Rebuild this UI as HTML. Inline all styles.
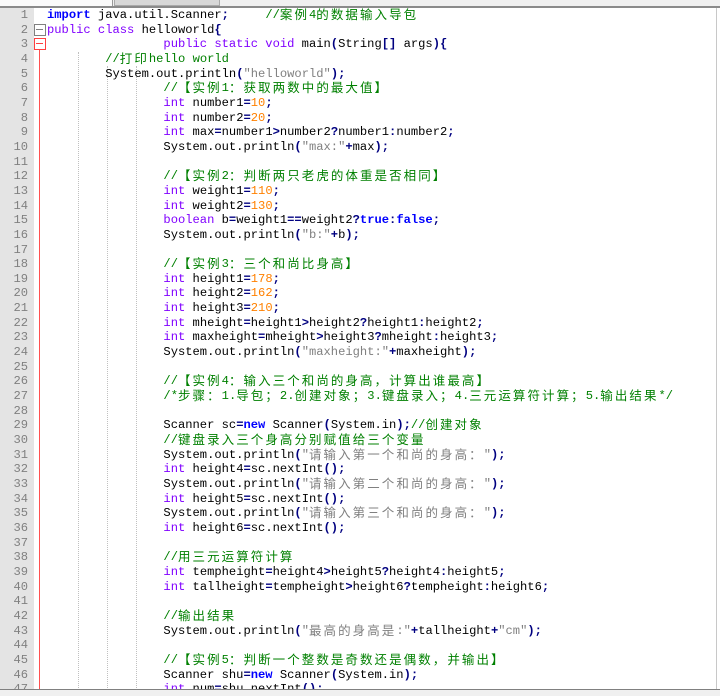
<!DOCTYPE html>
<html><head><meta charset="utf-8"><style>
html,body{margin:0;padding:0;width:720px;height:696px;overflow:hidden;background:#fff;position:relative;}
#top{position:absolute;left:0;top:0;width:720px;height:6px;background:#f0f0f0;}
#t1{position:absolute;left:0;top:0;width:112px;height:6px;background:#fafafa;border-right:1px solid #999;}
#t2{position:absolute;left:114px;top:0;width:104px;height:5px;background:#d8d8d8;border:1px solid #aaa;border-top:none;}
#topline{position:absolute;left:0;top:6px;width:720px;height:2px;background:#8a8a8a;}
#gut{position:absolute;left:0;top:8px;width:34px;height:681px;background:#e4e4e4;}
#fold{position:absolute;left:34px;top:8px;width:12px;height:681px;background:#fff;}
#nums{position:absolute;left:0;top:8px;width:28px;text-align:right;font:12.13px/14.65px "Liberation Mono",monospace;color:#808080;margin:0;}
pre#code{position:absolute;left:47px;top:8px;margin:0;font:12.13px/14.65px "Liberation Mono","Noto Sans CJK SC",monospace;color:#000;tab-size:4;-moz-tab-size:4;white-space:pre;}
pre#code>span, pre#code i{line-height:0;}
.g{position:absolute;top:52px;width:0;height:636px;border-left:1px dotted #c0c0c0;}
i{font-style:normal;font-family:"Noto Sans CJK SC",sans-serif;font-size:12.5px;letter-spacing:2.06px;line-height:0;position:relative;top:1px;}
.k{color:#0000ff;font-weight:bold}.t{color:#8000ff}.n{color:#ff8000}.s{color:#808080}.c{color:#008000}.o{color:#000080;font-weight:bold}
#bot{position:absolute;left:0;top:689px;width:720px;height:7px;background:#f0f0f0;border-top:1px solid #808080;z-index:5;}
#rb{position:absolute;left:716px;top:8px;width:1px;height:681px;background:#c8c8c8;}
</style></head><body>
<div id="top"><div id="t1"></div><div id="t2"></div></div>
<div id="topline"></div>
<div id="gut"></div>
<div id="fold">
<div style="position:absolute;left:0;top:16px;width:10px;height:10px;border:1px solid #808080;background:#fff"></div>
<div style="position:absolute;left:2px;top:21px;width:7px;height:1px;background:#808080"></div>
<div style="position:absolute;left:0;top:30px;width:10px;height:10px;border:1px solid #ff4040;background:#fff"></div>
<div style="position:absolute;left:2px;top:35px;width:7px;height:1px;background:#ff4040"></div>
<div style="position:absolute;left:5px;top:42px;width:1px;height:639px;background:#ff5050"></div>
</div>
<div class="g" style="left:78px"></div><div class="g" style="left:107px;top:66px;height:622px"></div><div class="g" style="left:136px;top:66px;height:622px"></div>
<pre id="nums">1
2
3
4
5
6
7
8
9
10
11
12
13
14
15
16
17
18
19
20
21
22
23
24
25
26
27
28
29
30
31
32
33
34
35
36
37
38
39
40
41
42
43
44
45
46
47</pre>
<pre id="code"><span class="k">import</span> java.util.Scanner<span class="o">;</span>     <span class="c">//<i>案例</i>4<i>的数据输入导包</i></span>
<span class="t">public class</span> helloworld<span class="o">{</span>
				<span class="t">public static void</span> main<span class="o">(</span>String<span class="o">[]</span> args<span class="o">){</span>
		<span class="c">//<i>打印</i>hello world</span>
		System.out.println<span class="o">(</span><span class="s">"helloworld"</span><span class="o">);</span>
				<span class="c">//<i>【实例</i>1<i>：获取两数中的最大值】</i></span>
				<span class="t">int</span> number1<span class="o">=</span><span class="n">10</span><span class="o">;</span>
				<span class="t">int</span> number2<span class="o">=</span><span class="n">20</span><span class="o">;</span>
				<span class="t">int</span> max<span class="o">=</span>number1<span class="o">&gt;</span>number2<span class="o">?</span>number1<span class="o">:</span>number2<span class="o">;</span>
				System.out.println<span class="o">(</span><span class="s">"max:"</span><span class="o">+</span>max<span class="o">);</span>

				<span class="c">//<i>【实例</i>2<i>：判断两只老虎的体重是否相同】</i></span>
				<span class="t">int</span> weight1<span class="o">=</span><span class="n">110</span><span class="o">;</span>
				<span class="t">int</span> weight2<span class="o">=</span><span class="n">130</span><span class="o">;</span>
				<span class="t">boolean</span> b<span class="o">=</span>weight1<span class="o">==</span>weight2<span class="o">?</span><span class="k">true</span><span class="o">:</span><span class="k">false</span><span class="o">;</span>
				System.out.println<span class="o">(</span><span class="s">"b:"</span><span class="o">+</span>b<span class="o">);</span>

				<span class="c">//<i>【实例</i>3<i>：三个和尚比身高】</i></span>
				<span class="t">int</span> height1<span class="o">=</span><span class="n">178</span><span class="o">;</span>
				<span class="t">int</span> height2<span class="o">=</span><span class="n">162</span><span class="o">;</span>
				<span class="t">int</span> height3<span class="o">=</span><span class="n">210</span><span class="o">;</span>
				<span class="t">int</span> mheight<span class="o">=</span>height1<span class="o">&gt;</span>height2<span class="o">?</span>height1<span class="o">:</span>height2<span class="o">;</span>
				<span class="t">int</span> maxheight<span class="o">=</span>mheight<span class="o">&gt;</span>height3<span class="o">?</span>mheight<span class="o">:</span>height3<span class="o">;</span>
				System.out.println<span class="o">(</span><span class="s">"maxheight:"</span><span class="o">+</span>maxheight<span class="o">);</span>

				<span class="c">//<i>【实例</i>4<i>：输入三个和尚的身高，计算出谁最高】</i></span>
				<span class="c">/*<i>步骤：</i>1.<i>导包；</i>2.<i>创建对象；</i>3.<i>键盘录入；</i>4.<i>三元运算符计算；</i>5.<i>输出结果</i>*/</span>

				Scanner sc<span class="o">=</span><span class="k">new</span> Scanner<span class="o">(</span>System.in<span class="o">);</span><span class="c">//<i>创建对象</i></span>
				<span class="c">//<i>键盘录入三个身高分别赋值给三个变量</i></span>
				System.out.println<span class="o">(</span><span class="s">"<i>请输入第一个和尚的身高：</i>"</span><span class="o">);</span>
				<span class="t">int</span> height4<span class="o">=</span>sc.nextInt<span class="o">();</span>
				System.out.println<span class="o">(</span><span class="s">"<i>请输入第二个和尚的身高：</i>"</span><span class="o">);</span>
				<span class="t">int</span> height5<span class="o">=</span>sc.nextInt<span class="o">();</span>
				System.out.println<span class="o">(</span><span class="s">"<i>请输入第三个和尚的身高：</i>"</span><span class="o">);</span>
				<span class="t">int</span> height6<span class="o">=</span>sc.nextInt<span class="o">();</span>

				<span class="c">//<i>用三元运算符计算</i></span>
				<span class="t">int</span> tempheight<span class="o">=</span>height4<span class="o">&gt;</span>height5<span class="o">?</span>height4<span class="o">:</span>height5<span class="o">;</span>
				<span class="t">int</span> tallheight<span class="o">=</span>tempheight<span class="o">&gt;</span>height6<span class="o">?</span>tempheight<span class="o">:</span>height6<span class="o">;</span>

				<span class="c">//<i>输出结果</i></span>
				System.out.println<span class="o">(</span><span class="s">"<i>最高的身高是</i>:"</span><span class="o">+</span>tallheight<span class="o">+</span><span class="s">"cm"</span><span class="o">);</span>

				<span class="c">//<i>【实例</i>5<i>：判断一个整数是奇数还是偶数，并输出】</i></span>
				Scanner shu<span class="o">=</span><span class="k">new</span> Scanner<span class="o">(</span>System.in<span class="o">);</span>
				<span class="t">int</span> num<span class="o">=</span>shu.nextInt<span class="o">();</span></pre>
<div id="rb"></div>
<div id="bot"></div>
</body></html>
